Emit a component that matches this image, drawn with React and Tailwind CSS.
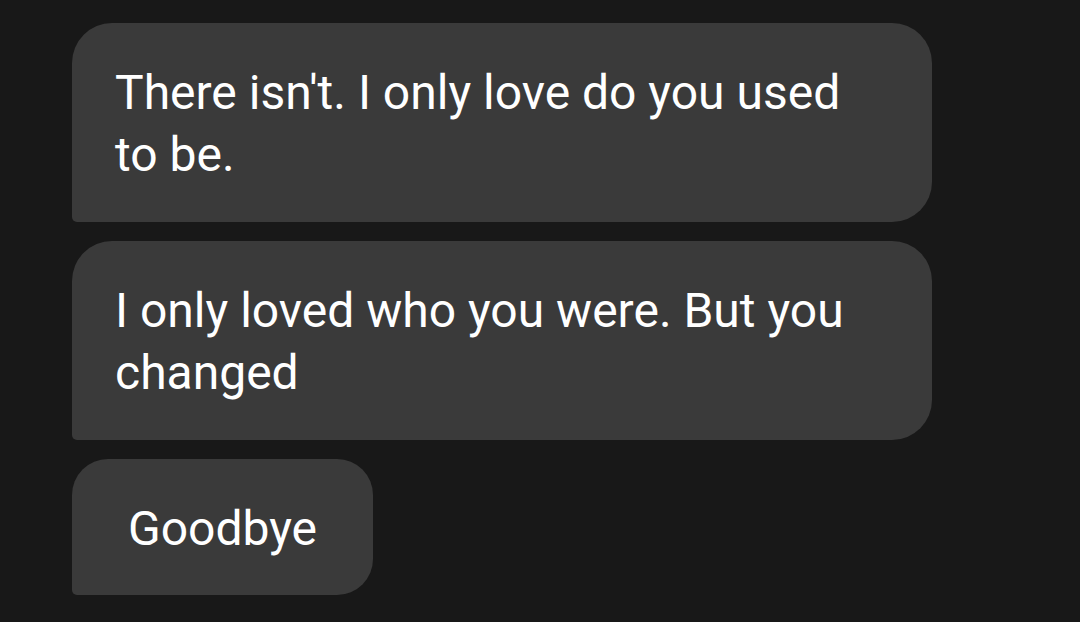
import React from 'react';

const messages = [
  { id: 1, text: "There isn't. I only love do you used to be.", wide: true },
  { id: 2, text: 'I only loved who you were. But you changed', wide: true },
  { id: 3, text: 'Goodbye', wide: false },
];

const App = () => {
  return (
    <div
      className="w-[1080px] h-[622px] overflow-hidden bg-[#181818] pl-[72px] pt-[23px] flex flex-col items-start gap-[19px]"
      style={{ fontFamily: 'Roboto, "Noto Sans", sans-serif' }}
    >
      {messages.map((m) =>
        m.wide ? (
          <div
            key={m.id}
            className="w-[860px] bg-[#3a3a3a] text-white rounded-[40px] rounded-bl-[5px] pl-[43px] pr-[60px] pt-[39px] pb-[36px] text-[48px] leading-[62px]"
          >
            {m.text}
          </div>
        ) : (
          <div
            key={m.id}
            className="bg-[#3a3a3a] text-white rounded-[36px] rounded-bl-[5px] px-[56px] pt-[39px] pb-[35px] text-[48px] leading-[62px]"
          >
            {m.text}
          </div>
        )
      )}
    </div>
  );
};

export default App;
